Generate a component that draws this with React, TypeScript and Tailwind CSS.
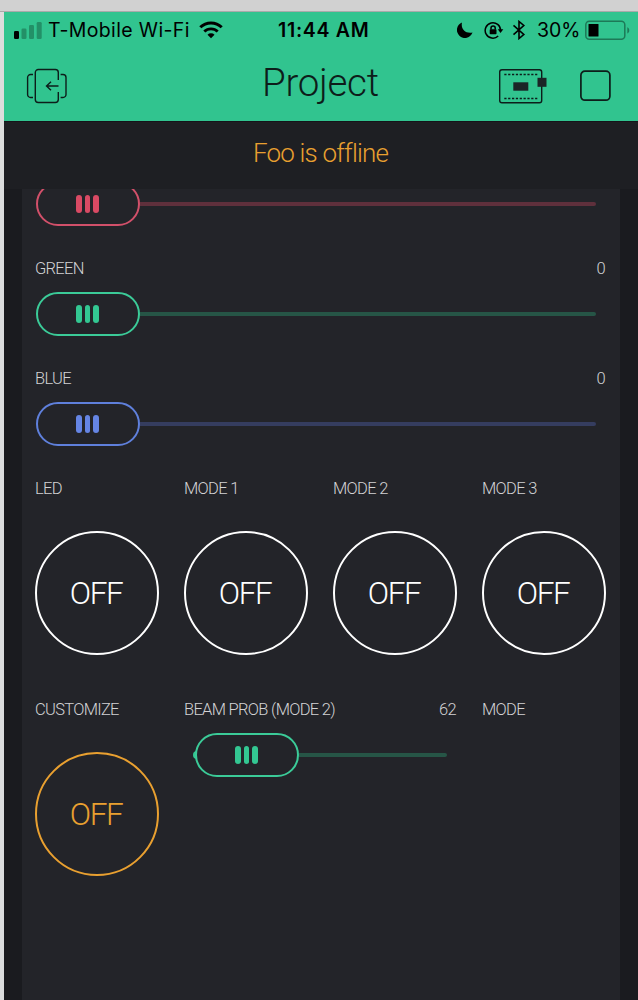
import React, { useState } from 'react';

type Tone = 'red' | 'green' | 'blue';

const TONES: Record<Tone, { border: string; grip: string; track: string }> = {
  red: { border: 'border-[#d2506a]', grip: 'bg-[#d94a64]', track: 'bg-[#5f303c]' },
  green: { border: 'border-[#3bcb98]', grip: 'bg-[#33c792]', track: 'bg-[#265546]' },
  blue: { border: 'border-[#5f80dc]', grip: 'bg-[#6585e4]', track: 'bg-[#353d5f]' },
};

const StatusBar: React.FC = () => (
  <div className="flex h-9 items-center font-[Inter,sans-serif] text-black">
    <svg className="ml-[10px] h-5 w-7 shrink-0" viewBox="0 0 28 20">
      <rect x="0" y="11" width="5" height="8" rx="1.3" />
      <g fill="#239067">
        <rect x="7.5" y="8.5" width="5" height="10.5" rx="1.3" />
        <rect x="15" y="5" width="5" height="14" rx="1.3" />
        <rect x="22.7" y="2" width="5" height="17" rx="1.3" />
      </g>
    </svg>
    <span className="ml-[6px] mt-[2px] w-[142px] shrink-0 whitespace-nowrap text-[19.5px] tracking-[0.35px]">T-Mobile Wi-Fi</span>
    <svg className="ml-[9px] h-[18px] w-6 shrink-0" viewBox="0 0 24 18" fill="none" stroke="#000">
      <path d="M1.3 6.3a15.3 15.3 0 0 1 21.4 0" strokeWidth="3" />
      <path d="M5.3 10.5a9.6 9.6 0 0 1 13.4 0" strokeWidth="2.8" />
      <path d="M8.5 13.8a5 5 0 0 1 7 0L12 17.3z" fill="#000" stroke="none" />
    </svg>
    <span className="ml-[55px] mt-[2px] w-[94px] shrink-0 whitespace-nowrap text-[19.5px] font-semibold tracking-[0.7px]">11:44 AM</span>
    <svg className="ml-[85px] h-4 w-4 shrink-0" viewBox="0 0 16 16">
      <path d="M5 .5C3.5 7 8.5 12 15.5 10.5A8 8 0 1 1 5 .5z" />
    </svg>
    <svg className="ml-[11px] h-[19px] w-5 shrink-0" viewBox="0 0 20 19" fill="none" stroke="#000" strokeWidth="1.5">
      <path d="M16.6 9.5A7.7 7.7 0 1 0 14.2 15" />
      <path d="M13.8 8.3h5.5l-2.8 3.8z" fill="#000" stroke="none" />
      <rect x="5.7" y="8.3" width="6.8" height="5" rx=".7" fill="#000" stroke="none" />
      <path d="M7 8.5V7a2.1 2.1 0 0 1 4.2 0v1.5" />
    </svg>
    <svg className="ml-[8px] h-[20px] w-[14px] shrink-0" viewBox="0 0 14 20" fill="none" stroke="#000" strokeWidth="1.6">
      <path d="M1.5 5.3l10.3 9.2L7 18.5v-17l4.8 4L1.5 14.7" />
    </svg>
    <span className="ml-[11px] mt-[2px] w-[42px] shrink-0 whitespace-nowrap text-[19.5px] tracking-[-0.1px]">30%</span>
    <svg className="ml-[6px] h-5 w-[45px] shrink-0" viewBox="0 0 45 20">
      <rect x=".8" y="1.2" width="39" height="18" rx="3.5" fill="none" stroke="#1d7957" strokeWidth="1.5" />
      <rect x="3.5" y="4" width="10" height="12.5" rx=".5" />
      <path d="M42.3 7.2c2.6.6 2.6 5.6 0 6.2z" fill="#1d7957" />
    </svg>
  </div>
);

const NavBar: React.FC = () => (
  <div className="flex h-[73px] items-center pt-[2px] text-[#0d1d1a]">
    <svg className="ml-[22px] h-[36px] w-[42px] shrink-0" viewBox="0 0 42 36" fill="none" stroke="currentColor" strokeWidth="1.4">
      <path d="M32.3 12V4.5a3 3 0 0 0-3-3h-17a3 3 0 0 0-3 3v27a3 3 0 0 0 3 3h17a3 3 0 0 0 3-3V24" />
      <path d="M32.5 18H20.8M25 13.8L20.5 18l4.5 4.2" />
      <path d="M7 6.5H4.6a3 3 0 0 0-3 3v17a3 3 0 0 0 3 3H7M34.6 6.5H37a3 3 0 0 1 3 3v17a3 3 0 0 1-3 3h-2.4" />
    </svg>
    <h1 className="ml-[194px] mb-[4px] w-[120px] shrink-0 whitespace-nowrap text-[38.5px] font-light leading-none tracking-[-0.3px]">Project</h1>
    <svg className="ml-[116px] h-[36px] w-[50px] shrink-0" viewBox="0 0 50 36">
      <rect x="1.7" y="1.7" width="42" height="33" rx="2.3" fill="none" stroke="currentColor" strokeWidth="1.4" />
      <path d="M6.3 6.5h33M6.3 30.5h33" stroke="currentColor" strokeWidth="1.7" strokeDasharray="2.2 1.65" />
      <rect x="15.3" y="14.3" width="15" height="8.4" fill="#1b2426" />
      <rect x="39.5" y="9.8" width="9" height="9" fill="#1b2426" />
    </svg>
    <svg className="ml-[31px] h-8 w-8 shrink-0" viewBox="0 0 32 32">
      <rect x="1.9" y="1.2" width="29" height="29" rx="4" fill="none" stroke="currentColor" strokeWidth="1.7" />
    </svg>
  </div>
);

const Label: React.FC<{ children: React.ReactNode }> = ({ children }) => (
  <span className="-ml-px whitespace-nowrap text-[16.5px] font-light leading-[23px] tracking-[-0.7px] text-[#d2d2d4]">{children}</span>
);

const Slider: React.FC<{ tone: Tone; started?: boolean }> = ({ tone, started = false }) => {
  const colors = TONES[tone];
  return (
    <div className="flex h-11 items-center">
      {started && <span className={`-mr-[2px] ml-[8px] h-2 w-1 shrink-0 rounded-l-full ${colors.grip}`} />}
      <div className={`-ml-[0.5px] flex h-11 w-[104px] shrink-0 items-center justify-center gap-[3px] rounded-full border-2 bg-[#232429] ${colors.border}`}>
        {[0, 1, 2].map(i => (
          <span key={i} className={`h-[18px] w-[5.5px] rounded-full ${colors.grip}`} />
        ))}
      </div>
      <div className={`mr-[9px] h-1 grow rounded-r-full ${colors.track}`} />
    </div>
  );
};

const SliderWidget: React.FC<{ label: string; value: number; tone: Tone; started?: boolean }> = ({ label, value, tone, started }) => (
  <div>
    <div className="mb-[15px] flex h-5 justify-between">
      <Label>{label}</Label>
      <Label>{value}</Label>
    </div>
    <Slider tone={tone} started={started} />
  </div>
);

const ButtonWidget: React.FC<{ label: string; accent?: boolean }> = ({ label, accent = false }) => {
  const [on, setOn] = useState(false);
  return (
    <div className="w-[124px]">
      <div className="flex h-5">
        <Label>{label}</Label>
      </div>
      <button
        onClick={() => setOn(!on)}
        className={`-ml-px mt-[34px] flex h-[124px] w-[124px] items-center justify-center rounded-full border-2 pr-[2px] pt-[2px] text-[31.5px] font-light tracking-[-1.5px] ${
          accent ? 'border-[#e9a030] text-[#e9a030]' : 'border-white text-white'
        }`}
      >
        {on ? 'ON' : 'OFF'}
      </button>
    </div>
  );
};

const App: React.FC = () => (
  <div className="flex h-[1000px] w-[638px] flex-col overflow-hidden bg-[#d1d1d1] font-[Roboto,sans-serif] antialiased">
    <div className="h-3 shrink-0 border-b border-[#a9aaaa]" />
    <div className="flex min-h-0 grow flex-col border-l-4 border-[#dcdddd] bg-[#1a1b1f]">
      <header className="h-[109px] shrink-0 bg-[#31c48f]">
        <StatusBar />
        <NavBar />
      </header>

      <div className="flex h-[68px] shrink-0 items-center justify-center border-t border-[#15151a] bg-[#1e1f23] pb-1 pr-px text-[26px] font-light tracking-[-0.8px] text-[#e9a030]">
        Foo is offline
      </div>

      <main className="ml-[18px] mr-[18px] min-h-0 grow overflow-hidden bg-[#232429] pl-[14px] pr-[15px]">
        <div className="-mt-[7px] mb-[31px]">
          <Slider tone="red" />
        </div>
        <div className="flex flex-col gap-[31px]">
          <SliderWidget label="GREEN" value={0} tone="green" />
          <SliderWidget label="BLUE" value={0} tone="blue" />
        </div>

        <div className="mt-[31px] grid grid-cols-[149px_149px_149px_124px] gap-y-[43px]">
          <ButtonWidget label="LED" />
          <ButtonWidget label="MODE 1" />
          <ButtonWidget label="MODE 2" />
          <ButtonWidget label="MODE 3" />

          <ButtonWidget label="CUSTOMIZE" accent />
          <div className="col-span-2 mr-[27px]">
            <SliderWidget label="BEAM PROB (MODE 2)" value={62} tone="green" started />
          </div>
          <Label>MODE</Label>
        </div>
      </main>
    </div>
  </div>
);

export default App;
